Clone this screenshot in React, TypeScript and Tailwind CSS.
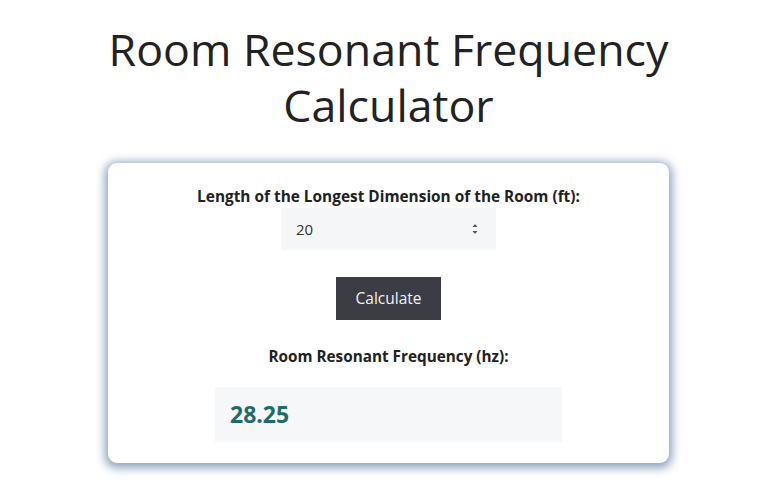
import React from "react";

export default function App() {
  return (
    <div
      className="w-[768px] h-[498px] bg-white flex flex-col items-center pl-[9px] overflow-hidden"
      style={{ fontFamily: '"Open Sans", "Noto Sans", sans-serif' }}
    >
      <h1 className="mt-[21px] text-[44.7px] leading-[56px] text-[#222] text-center font-normal w-[620px]">
        Room Resonant Frequency Calculator
      </h1>
      <div className="mt-[30px] w-[561px] h-[300px] bg-white rounded-[9px] shadow-[0_2px_10px_3px_rgba(80,110,150,0.65)] flex flex-col items-center">
        <label className="mt-[23px] text-[15.4px] leading-[21px] font-bold text-[#222]">
          Length of the Longest Dimension of the Room (ft):
        </label>
        <div className="mt-[1px] w-[215px] h-[42px] bg-[#f5f6f8] flex items-center pl-[15px] pr-[17px] text-[15px] text-[#333]">
          <span className="flex-1">20</span>
          <svg width="8" height="16" viewBox="0 0 8 16">
            <path d="M1.5 6 L4 3 L6.5 6 Z" fill="#555" />
            <path d="M1.5 10 L4 13 L6.5 10 Z" fill="#555" />
          </svg>
        </div>
        <button className="mt-[27px] w-[105px] h-[43px] bg-[#3b3c44] text-[#f2f2f2] text-[15.5px]">
          Calculate
        </button>
        <div className="mt-[26px] text-[15.3px] leading-[21px] font-bold text-[#222]">
          Room Resonant Frequency (hz):
        </div>
        <div className="mt-[20px] w-[347px] h-[55px] bg-[#f5f7f9] flex items-center pl-[15px] text-[23px] font-bold text-[#1e6b68]">
          28.25
        </div>
      </div>
    </div>
  );
}
